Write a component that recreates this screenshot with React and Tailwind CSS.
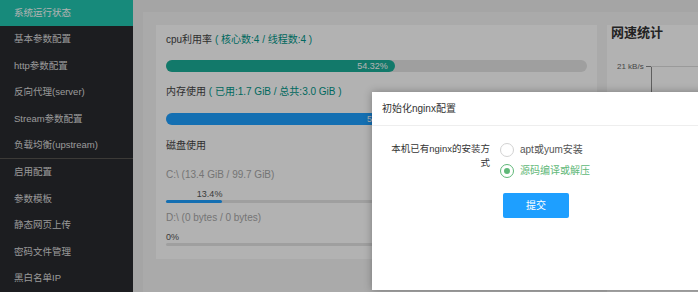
import React, { useState } from 'react';

const font = { fontFamily: '"Liberation Sans", "Noto Sans CJK SC", sans-serif' };

const menuTop = ['系统运行状态', '基本参数配置', 'http参数配置', '反向代理(server)', 'Stream参数配置', '负载均衡(upstream)'];
const menuBottom = ['启用配置', '参数模板', '静态网页上传', '密码文件管理', '黑白名单IP'];

function Sidebar() {
  const item = (label, active) => (
    <div
      key={label}
      className={`h-[26.4px] flex items-center pl-[14px] text-[9.5px] ${active ? 'bg-[#22c6b0] text-white' : 'text-[#dcdcdc]'}`}
    >
      {label}
    </div>
  );
  return (
    <aside className="w-[133px] shrink-0 bg-[#292a2f] h-full">
      {menuTop.map((m, i) => item(m, i === 0))}
      <div className="h-px bg-[#57534f]" />
      {menuBottom.map((m) => item(m, false))}
    </aside>
  );
}

function BigBar({ pct, color }) {
  return (
    <div className="h-[12px] w-[421px] rounded-full bg-[#e4e4e4]">
      <div className={`h-full rounded-full ${color} flex items-center justify-end pr-[7px]`} style={{ width: `${pct}%` }}>
        <span className="text-[9px] text-white leading-none">{pct}%</span>
      </div>
    </div>
  );
}

function DiskBar({ pct }) {
  return (
    <>
      <div className="h-[12px] leading-[12px] text-[9px] text-[#555]" style={{ width: pct ? `${pct}%` : 'auto', maxWidth: 421 }}>
        <div className={pct ? 'text-right' : ''}>{pct}%</div>
      </div>
      <div className="h-[3px] w-[421px] rounded-full bg-[#e4e4e4]">
        <div className="h-full rounded-full bg-[#1e9fff]" style={{ width: `${pct}%` }} />
      </div>
    </>
  );
}

function Dashboard() {
  return (
    <main className="flex-1 bg-[#ededed] pl-[10px] pt-[12px]">
      <div className="bg-[#f4f4f4] h-full pl-[13px] pt-[13px] flex gap-[10px]">
        <section className="w-[441px] h-[234px] bg-white px-[10px] pt-[8px] text-[10px] text-[#444]">
          <div className="leading-[14px]">
            cpu利用率 <span className="text-[#009688]">( 核心数:4 / 线程数:4 )</span>
          </div>
          <div className="mt-[13px]">
            <BigBar pct={54.32} color="bg-[#1aae98]" />
          </div>
          <div className="mt-[13px] leading-[14px]">
            内存使用 <span className="text-[#009688]">( 已用:1.7 GiB / 总共:3.0 GiB )</span>
          </div>
          <div className="mt-[14px]">
            <BigBar pct={56.67} color="bg-[#1e9fff]" />
          </div>
          <div className="mt-[14px] leading-[14px]">磁盘使用</div>
          <div className="mt-[15px] leading-[14px] text-[#a8a8a8]">C:\ (13.4 GiB / 99.7 GiB)</div>
          <div className="mt-[6px]">
            <DiskBar pct={13.4} />
          </div>
          <div className="mt-[8px] leading-[14px] text-[#a8a8a8]">D:\ (0 bytes / 0 bytes)</div>
          <div className="mt-[6px]">
            <DiskBar pct={0} />
          </div>
        </section>
        <section className="flex-1 h-[280px] bg-white pl-[4px]">
          <div className="text-[13px] font-bold text-[#333] leading-[16px]">网速统计</div>
          <div className="flex items-start mt-[23px] pl-[6px]">
            <span className="whitespace-nowrap text-[8px] leading-[8px] text-[#666] mt-[-1px]">21 kB/s</span>
            <svg width="60" height="220" className="ml-[2px] shrink-0">
              <line x1="0" y1="2.5" x2="5" y2="2.5" stroke="#888" strokeWidth="1" />
              <line x1="5.5" y1="2" x2="5.5" y2="220" stroke="#888" strokeWidth="1" />
              <line x1="5" y1="2.5" x2="60" y2="2.5" stroke="#ddd" strokeWidth="1" />
            </svg>
          </div>
        </section>
      </div>
    </main>
  );
}

function Radio({ label, checked, onClick }) {
  return (
    <div className="h-[21px] flex items-center cursor-pointer" onClick={onClick}>
      <span
        className={`w-[14px] h-[14px] rounded-full border-[1.5px] flex items-center justify-center ${checked ? 'border-[#5fb878]' : 'border-[#d2d2d2]'}`}
      >
        {checked && <span className="w-[6px] h-[6px] rounded-full bg-[#5fb878]" />}
      </span>
      <span className={`ml-[6px] text-[10px] ${checked ? 'text-[#5fb878]' : 'text-[#555]'}`}>{label}</span>
    </div>
  );
}

function InitModal() {
  const [mode, setMode] = useState('source');
  return (
    <div className="absolute left-[372px] top-[92px] w-[340px] h-[198px] bg-white shadow-[0_0_8px_rgba(0,0,0,0.3)]">
      <div className="h-[34px] flex items-center pl-[10px] border-b border-[#eee] text-[10px] text-[#333]">
        初始化nginx配置
      </div>
      <div className="pt-[13px] flex">
        <div className="ml-[14px] w-[104px] pt-[3px] text-right text-[9.5px] leading-[14px] text-[#333]">
          本机已有nginx的安装方式
        </div>
        <div className="ml-[10px]">
          <Radio label="apt或yum安装" checked={mode === 'apt'} onClick={() => setMode('apt')} />
          <Radio label="源码编译或解压" checked={mode === 'source'} onClick={() => setMode('source')} />
        </div>
      </div>
      <div className="pl-[131px] mt-[11px]">
        <button className="w-[66px] h-[25px] bg-[#1e9fff] text-white text-[10px] rounded-[2px]">提交</button>
      </div>
    </div>
  );
}

export default function App() {
  return (
    <div className="relative w-[698px] h-[292px] overflow-hidden flex" style={font}>
      <Sidebar />
      <Dashboard />
      <div className="absolute inset-0 bg-black/30" />
      <InitModal />
    </div>
  );
}
